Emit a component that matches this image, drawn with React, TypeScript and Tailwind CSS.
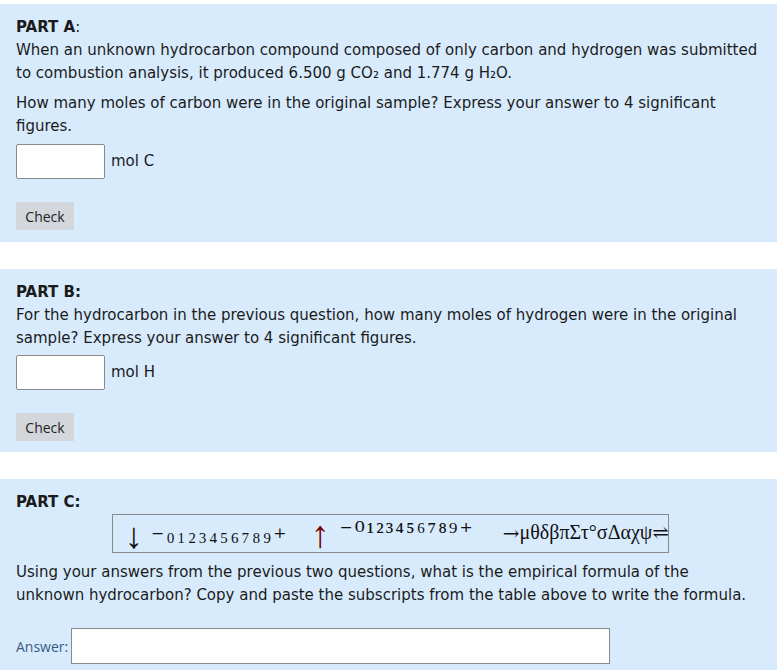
import React from "react";

const body = "font-['DejaVu_Sans',Verdana,sans-serif] text-[15px] leading-[23px] text-[#1b1b1b]";

const CheckButton = () => (
  <button className="h-[28px] w-[58px] bg-[#d3d6db] text-[14px] text-[#222] font-['Open_Sans',sans-serif]">
    Check
  </button>
);

const AnswerBox = ({ unit }: { unit: string }) => (
  <div className="flex items-center gap-[6px]">
    <input className="h-[35px] w-[89px] border border-[#8a8a8a] bg-white rounded-[2px]" />
    <span>{unit}</span>
  </div>
);

export default function App() {
  return (
    <div className={`${body} w-[777px] bg-white pt-[4px]`}>
      {/* PART A */}
      <div className="bg-[#d8ebfd] px-[16px] pt-[12px] pb-[12px]">
        <div className="font-bold">PART A<span className="font-normal">:</span></div>
        <p>
          When an unknown hydrocarbon compound composed of only carbon and hydrogen was submitted to combustion
          analysis, it produced 6.500 g CO₂ and 1.774 g H₂O.
        </p>
        <p className="mt-[7px]">
          How many moles of carbon were in the original sample? Express your answer to 4 significant figures.
        </p>
        <div className="mt-[6px]">
          <AnswerBox unit="mol C" />
        </div>
        <div className="mt-[23px]">
          <CheckButton />
        </div>
      </div>

      {/* PART B */}
      <div className="mt-[27px] bg-[#d8ebfd] px-[16px] pt-[12px] pb-[11px]">
        <div className="font-bold">PART B:</div>
        <p>
          For the hydrocarbon in the previous question, how many moles of hydrogen were in the original sample?
          Express your answer to 4 significant figures.
        </p>
        <div className="mt-[5px]">
          <AnswerBox unit="mol H" />
        </div>
        <div className="mt-[23px]">
          <CheckButton />
        </div>
      </div>

      {/* PART C */}
      <div className="mt-[27px] bg-[#d8ebfd] px-[16px] pt-[12px] pb-[6px]">
        <div className="font-bold">PART C:</div>
        <div className="flex justify-center pl-[4px]">
          <div className="flex h-[39px] w-[557px] items-center border border-[#8a8a8a] pl-[12px] font-['Liberation_Serif','DejaVu_Serif',serif] text-[20px] text-[#111]">
            <span className="mt-[4px] text-[36px] leading-none">↓</span>
            <span className="ml-[8px] -mt-[8px] text-[25px] leading-none tracking-[2px]">₋₀₁₂₃₄₅₆₇₈₉₊</span>
            <span className="ml-[22px] text-[38px] leading-none text-[#7a0000]">↑</span>
            <span className="ml-[10px] -mt-[4px] text-[25px] leading-none tracking-[2px]">⁻⁰¹²³⁴⁵⁶⁷⁸⁹⁺</span>
            <span className="ml-[28px] -mt-[2px] flex items-center">
              <span className="font-['DejaVu_Serif',serif] text-[20px] leading-none">→</span>
              <span>μθδβπΣτ°σΔαχψ⇌</span>
            </span>
          </div>
        </div>
        <p className="mt-[8px]">
          Using your answers from the previous two questions, what is the empirical formula of the unknown
          hydrocarbon? Copy and paste the subscripts from the table above to write the formula.
        </p>
        <div className="mt-[21px] flex items-center gap-[3px]">
          <span className="font-['Open_Sans',sans-serif] text-[14px] text-[#3a5a80]">Answer:</span>
          <input className="h-[36px] w-[539px] border border-[#8a8a8a] bg-white" />
        </div>
      </div>
    </div>
  );
}
